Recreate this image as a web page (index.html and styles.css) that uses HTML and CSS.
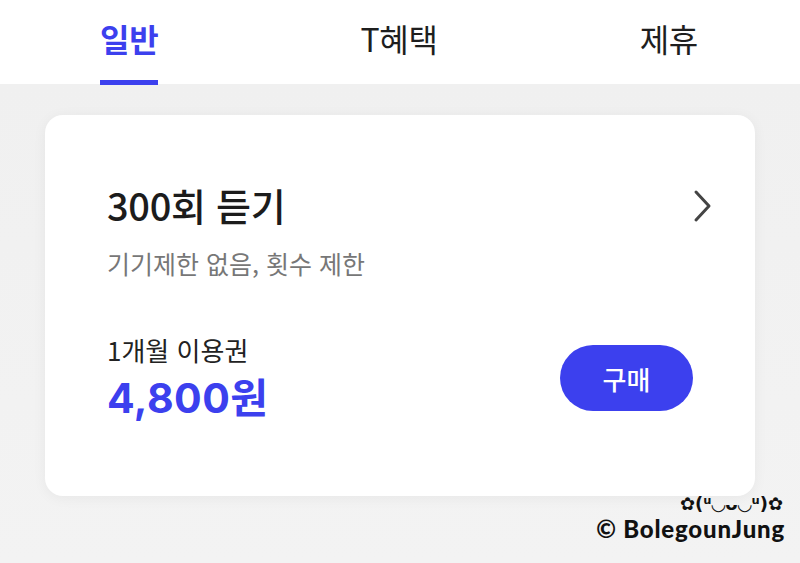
FILE: index.html
```html
<!DOCTYPE html>
<html lang="ko">
<head>
<meta charset="utf-8">
<link rel="stylesheet" href="styles.css">
</head>
<body>
<div class="page">
  <nav class="tabs">
    <div class="tab active">일반<span class="bar"></span></div>
    <div class="tab">T혜택</div>
    <div class="tab">제휴</div>
  </nav>
  <main class="content">
    <section class="card">
      <div class="head">
        <h1 class="title">300회 듣기</h1>
        <svg class="chev" width="20" height="34" viewBox="0 0 20 34"><path d="M3 3 L16 17 L3 31" fill="none" stroke="#444" stroke-width="3" stroke-linecap="round" stroke-linejoin="round"/></svg>
      </div>
      <p class="sub">기기제한 없음, 횟수 제한</p>
      <div class="foot">
        <div class="price">
          <div class="period">1개월 이용권</div>
          <div class="amount">4,800원</div>
        </div>
        <button class="buy">구매</button>
      </div>
    </section>
    <div class="mark">
      <div class="emo">✿(ᵘ◡ᴗ◡ᵘ)✿</div>
      <div class="name">© BolegounJung</div>
    </div>
  </main>
</div>
</body>
</html>
```
FILE: styles.css
```css
* { box-sizing: border-box; }
html, body { margin: 0; padding: 0; }
body {
  width: 800px;
  height: 563px;
  overflow: hidden;
  background: #f2f2f2;
  font-family: "Noto Sans CJK KR", "Noto Sans", sans-serif;
  color: #222;
}
.page { display: flex; flex-direction: column; height: 563px; }
.tabs {
  height: 84px;
  background: #fff;
  display: flex;
  justify-content: space-between;
  align-items: flex-start;
  padding: 0 102px 0 100px;
}
.tab {
  position: relative;
  height: 84px;
  font-size: 32px;
  font-weight: 400;
  line-height: 1;
  padding-top: 22px;
  color: #1e1e1e;
  letter-spacing: -0.3px;
}
.tab.active { color: #3c40ee; font-weight: 700; }
.tab .bar {
  position: absolute;
  left: 0; right: 0; bottom: -1px;
  height: 5px;
  background: #3c40ee;
}
.content {
  flex: 1;
  display: flex;
  flex-direction: column;
  align-items: flex-end;
  padding: 31px 45px 0 45px;
  background: linear-gradient(#f0f0f0, #f3f3f3);
}
.card {
  width: 710px;
  height: 381px;
  background: #fff;
  border-radius: 18px;
  box-shadow: 0 2px 14px rgba(0,0,0,0.05);
  padding: 64px 42px 0 62px;
  display: flex;
  flex-direction: column;
}
.head { display: flex; justify-content: space-between; align-items: center; }
.title {
  margin: 0;
  font-size: 38px;
  font-weight: 500;
  line-height: 52px;
  color: #1c1c1c;
  letter-spacing: -0.3px;
}
.chev { margin-top: 2px; }
.sub {
  margin: 14px 0 0;
  font-size: 25px;
  line-height: 36px;
  color: #777;
  font-weight: 400;
}
.foot {
  margin-top: 52px;
  display: flex;
  justify-content: space-between;
  align-items: center;
}
.period { font-size: 26px; line-height: 34px; color: #222; }
.amount {
  font-size: 41px;
  font-weight: 700;
  line-height: 50px;
  color: #3c40ee;
  margin-top: 6px;
  font-family: "Inter", "Noto Sans CJK KR", sans-serif;
  letter-spacing: 0.5px;
}
.buy {
  width: 133px;
  height: 66px;
  border: none;
  border-radius: 33px;
  background: #3c40ee;
  color: #fff;
  font-family: "Noto Sans CJK KR", sans-serif;
  font-size: 26px;
  font-weight: 500;
  margin-right: 20px;
  margin-top: 0;
}
.mark {
  margin-top: -3px;
  margin-right: -30px;
  display: flex;
  flex-direction: column;
  align-items: flex-end;
  color: #111;
}
.emo { font-size: 18px; line-height: 22px; font-weight: 700; margin-right: 2px; font-family: "DejaVu Sans", sans-serif; letter-spacing: 0; }
.name { font-size: 24px; line-height: 28px; font-weight: 900; font-family: "Lato", "DejaVu Sans", sans-serif; letter-spacing: 0.8px; }
```
